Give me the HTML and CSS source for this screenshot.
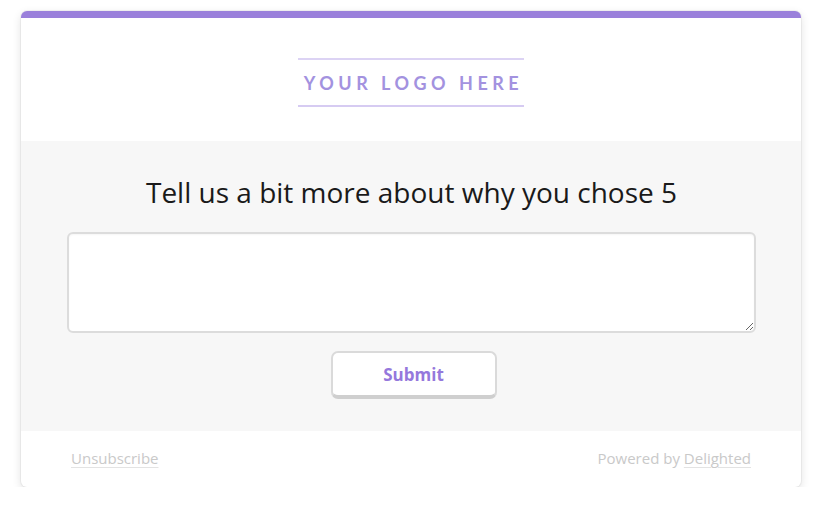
FILE: index.html
```html
<!DOCTYPE html>
<html>
<head>
<meta charset="utf-8">
<link rel="stylesheet" href="styles.css">
</head>
<body>
<div class="card">
  <div class="header">
    <div class="logo">YOUR LOGO HERE</div>
  </div>
  <div class="main">
    <h1 class="question">Tell us a bit more about why you chose 5</h1>
    <textarea class="answer"></textarea>
    <button class="submit">Submit</button>
  </div>
  <div class="footer">
    <a class="link" href="#">Unsubscribe</a>
    <span class="powered">Powered by <a class="link" href="#">Delighted</a></span>
  </div>
</div>
</body>
</html>
```
FILE: styles.css
```css
html, body {
  margin: 0;
  padding: 0;
  background: #ffffff;
}
body {
  padding: 11px 21px 0 21px;
  font-family: "Open Sans", "Lato", sans-serif;
}
.card {
  width: 780px;
  background: #fff;
  border-top: 7px solid #9a80db;
  border-radius: 6px;
  box-shadow: 0 3px 10px rgba(0,0,0,0.12), 0 0 0 1px rgba(0,0,0,0.04);
  overflow: hidden;
}
.header {
  height: 123px;
  display: flex;
  align-items: center;
  justify-content: center;
}
.logo {
  width: 226px;
  box-sizing: border-box;
  border-top: 2px solid #dcd3f4;
  border-bottom: 2px solid #d6cbf2;
  height: 49px;
  display: flex;
  align-items: center;
  justify-content: center;
  padding-left: 5px;
  color: #a392df;
  font-family: "Lato", sans-serif;
  font-weight: 700;
  font-size: 18px;
  letter-spacing: 4.5px;
  margin-top: 6px;
}
.main {
  background: #f7f7f7;
  height: 290px;
  display: flex;
  flex-direction: column;
  align-items: center;
  box-sizing: border-box;
  padding-top: 32px;
}
.question {
  margin: 0;
  font-weight: 400;
  font-size: 28px;
  color: #1a1a1a;
  line-height: 38px;
  letter-spacing: 0px;
  margin-left: 1px;
}
.answer {
  margin-top: 21px;
  width: 689px;
  height: 101px;
  box-sizing: border-box;
  border: 2px solid #dcdcdc;
  border-radius: 6px;
  background: #fff;
  box-shadow: inset 0 1px 2px rgba(0,0,0,0.04);
  resize: vertical;
  outline: none;
}
.submit {
  margin-top: 18px;
  margin-left: 5px;
  width: 166px;
  height: 48px;
  box-sizing: border-box;
  border: 2px solid #dadada;
  border-bottom-width: 4px;
  border-bottom-color: #cfcfcf;
  border-radius: 7px;
  background: #fff;
  color: #9578dc;
  font-family: "Open Sans", sans-serif;
  font-weight: 700;
  font-size: 17px;
  padding: 0;
  padding-top: 1px;
}
.footer {
  height: 56px;
  display: flex;
  align-items: center;
  justify-content: space-between;
  padding: 0 50px 2px 50px;
  box-sizing: border-box;
  font-size: 15px;
  color: #c9c9c9;
}
.link {
  color: #c9c9c9;
  text-decoration: underline;
  text-decoration-color: #e3e3e3;
  text-underline-offset: 3px;
}
```
